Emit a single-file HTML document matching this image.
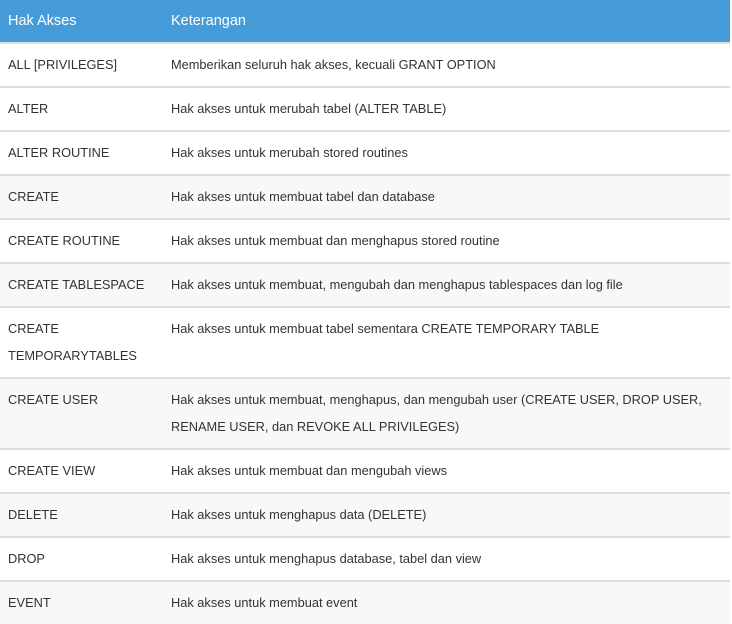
<!DOCTYPE html>
<html><head><style>
body{margin:0;background:#fff;font-family:"Liberation Sans",sans-serif;}
table{border-collapse:collapse;width:730px;font-size:12.8px;color:#333;}
th{background:#459cd8;color:#fff;font-weight:normal;text-align:left;height:42px;padding:0 0 0 8px;font-size:14.5px;}
td{border-top:2px solid #dedede;padding:7px 0 8px 8px;line-height:27px;vertical-align:top;}
td:first-child{width:155px;}
tr:nth-child(even) td{background:#f2f2f2;}
tr.g td{background:#f8f8f8!important;}
tr.w td{background:#fff!important;}
</style></head><body>
<table>
<tr><th>Hak Akses</th><th>Keterangan</th></tr>
<tr class="w"><td>ALL [PRIVILEGES]</td><td>Memberikan seluruh hak akses, kecuali GRANT OPTION</td></tr>
<tr><td>ALTER</td><td>Hak akses untuk merubah tabel (ALTER TABLE)</td></tr>
<tr class="w"><td>ALTER ROUTINE</td><td>Hak akses untuk merubah stored routines</td></tr>
<tr class="g"><td>CREATE</td><td>Hak akses untuk membuat tabel dan database</td></tr>
<tr class="w"><td>CREATE ROUTINE</td><td>Hak akses untuk membuat dan menghapus stored routine</td></tr>
<tr class="g"><td>CREATE TABLESPACE</td><td>Hak akses untuk membuat, mengubah dan menghapus tablespaces dan log file</td></tr>
<tr class="w"><td>CREATE TEMPORARYTABLES</td><td>Hak akses untuk membuat tabel sementara CREATE TEMPORARY TABLE</td></tr>
<tr class="g"><td>CREATE USER</td><td>Hak akses untuk membuat, menghapus, dan mengubah user (CREATE USER, DROP USER, RENAME USER, dan REVOKE ALL PRIVILEGES)</td></tr>
<tr class="w"><td>CREATE VIEW</td><td>Hak akses untuk membuat dan mengubah views</td></tr>
<tr class="g"><td>DELETE</td><td>Hak akses untuk menghapus data (DELETE)</td></tr>
<tr class="w"><td>DROP</td><td>Hak akses untuk menghapus database, tabel dan view</td></tr>
<tr class="g"><td>EVENT</td><td>Hak akses untuk membuat event</td></tr>
</table>
</body></html>
